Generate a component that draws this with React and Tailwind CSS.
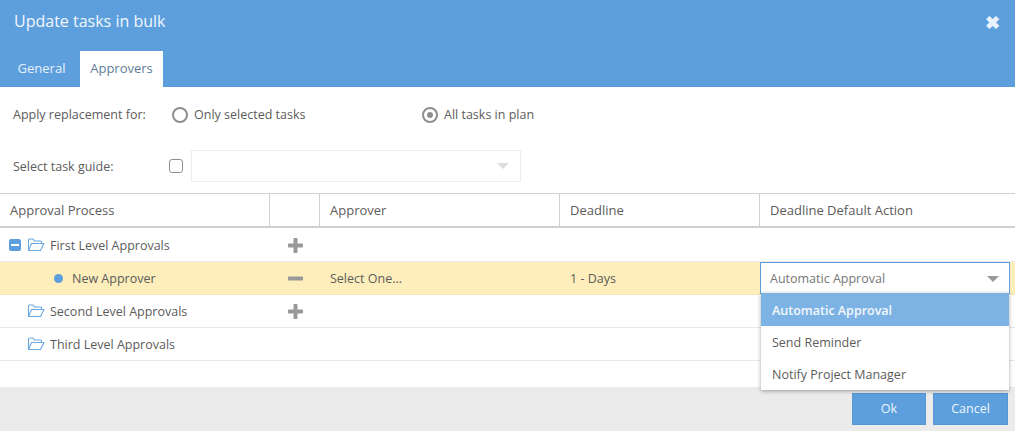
const rows = [
  { name: "First Level Approvals", folder: true, expander: true, add: true },
  { name: "New Approver", selected: true },
  { name: "Second Level Approvals", folder: true, add: true },
  { name: "Third Level Approvals", folder: true },
];

const options = ["Automatic Approval", "Send Reminder", "Notify Project Manager"];

function FolderOpen() {
  return (
    <svg width="18" height="14" viewBox="0 0 18 14" fill="none" stroke="#6aa8e2" strokeWidth="1.1" className="shrink-0">
      <path d="M1.5 12.5 V2 Q1.5 1 2.5 1 H6 L7.5 3 H13.5 Q14.5 3 14.5 4 V5.5" />
      <path d="M1.5 12.5 L4.5 5.5 H17 L13.5 12.5 Z" strokeLinejoin="round" />
    </svg>
  );
}

function PlusIcon() {
  return (
    <svg width="15" height="15" viewBox="0 0 15 15" fill="#999999">
      <rect x="0" y="5.5" width="15" height="4" rx="0.8" />
      <rect x="5.5" y="0" width="4" height="15" rx="0.8" />
    </svg>
  );
}

function MinusIcon() {
  return (
    <svg width="15" height="15" viewBox="0 0 15 15" fill="#999999">
      <rect x="0" y="5.5" width="15" height="4" rx="0.8" />
    </svg>
  );
}

function Caret({ color }) {
  return <span className={`w-0 h-0 border-x-[6px] border-x-transparent border-t-[6px] ${color}`} />;
}

function Radio({ checked }) {
  return (
    <span className="w-[16px] h-[16px] rounded-full border-[2px] border-[#8f8f8f] flex items-center justify-center bg-white">
      {checked && <span className="w-[6px] h-[6px] rounded-full bg-[#8f8f8f]" />}
    </span>
  );
}

function ApprovalRow({ row }) {
  return (
    <div className={`flex h-[33px] border-b ${row.selected ? "bg-[#fdeebb] border-[#f5e6b4]" : "border-[#e8e8e8]"}`}>
      <div className="w-[270px] flex items-center">
        {row.selected ? (
          <div className="flex items-center pl-[54px]">
            <span className="w-[9px] h-[9px] rounded-full bg-[#5d9fdd]" />
            <span className="ml-[9px] pt-[2px]">{row.name}</span>
          </div>
        ) : (
          <div className="flex items-center pl-[9px]">
            <span className="w-[12px] h-[12px] mr-[6px] rounded-[2px] flex items-center justify-center">
              {row.expander && (
                <span className="w-[12px] h-[12px] rounded-[2px] bg-[#5d9fdd] flex items-center justify-center">
                  <span className="w-[8px] h-[2px] bg-white" />
                </span>
              )}
            </span>
            <FolderOpen />
            <span className="ml-[5px] pt-[2px]">{row.name}</span>
          </div>
        )}
      </div>
      <div className="w-[50px] flex items-center justify-center">
        {row.add && <PlusIcon />}
        {row.selected && <MinusIcon />}
      </div>
      {row.selected && (
        <>
          <div className="w-[240px] pl-[10px] pt-[2px] flex items-center">Select One...</div>
          <div className="w-[200px] pl-[10px] pt-[2px] flex items-center">1 - Days</div>
          <div className="w-[250px] flex items-center justify-between pl-[9px] pr-[10px] pt-[2px] bg-white border border-[#5d9fdd] h-[32px] text-[#777777]">
            Automatic Approval
            <Caret color="border-t-[#999999]" />
          </div>
        </>
      )}
    </div>
  );
}

export default function App() {
  return (
    <div className="relative w-[1015px] h-[431px] overflow-hidden bg-white text-[12.5px] text-[#5c5c5c] font-['Open_Sans',sans-serif]">
      <header className="h-[87px] bg-[#5d9fdd] relative">
        <h1 className="pl-[14px] pt-[10px] text-[16px] leading-[22px] text-[#f1f6fc]">Update tasks in bulk</h1>
        <span className="absolute right-[15px] top-[12px] text-[#eaf3fb] text-[18px] leading-[20px] font-bold">✖</span>
        <div className="flex pl-[3px] mt-[19px] text-[13px]">
          <div className="w-[77px] h-[36px] flex items-center justify-center text-[#e6f0fa]">General</div>
          <div className="w-[83px] h-[36px] flex items-center justify-center bg-white text-[#5f7d99]">Approvers</div>
        </div>
      </header>

      <div className="h-[106px] px-[13px]">
        <div className="flex items-center h-[55px]">
          <span className="w-[159px] pt-[2px]">Apply replacement for:</span>
          <Radio />
          <span className="ml-[6px] w-[228px] pt-[2px]">Only selected tasks</span>
          <Radio checked />
          <span className="ml-[6px] pt-[2px]">All tasks in plan</span>
        </div>
        <div className="flex items-center h-[32px] mt-[8px]">
          <span className="w-[156px] pt-[2px]">Select task guide:</span>
          <span className="w-[14px] h-[14px] rounded-[3px] border-[1.5px] border-[#8f8f8f]" />
          <div className="ml-[8px] w-[330px] h-[32px] border border-[#eeeeee] flex items-center justify-end pr-[11px]">
            <Caret color="border-t-[#dddddd]" />
          </div>
        </div>
      </div>

      <div className="h-[35px] flex border-t border-[#d0d0d0] border-b-2 text-[13px]">
        <div className="w-[270px] pl-[10px] pt-px flex items-center border-r border-[#d0d0d0]">Approval Process</div>
        <div className="w-[50px] border-r border-[#d0d0d0]" />
        <div className="w-[240px] pl-[10px] pt-px flex items-center border-r border-[#d0d0d0]">Approver</div>
        <div className="w-[200px] pl-[10px] pt-px flex items-center border-r border-[#d0d0d0]">Deadline</div>
        <div className="pl-[10px] pt-px flex items-center">Deadline Default Action</div>
      </div>

      <div className="h-[159px] pt-px">
        {rows.map((row) => (
          <ApprovalRow key={row.name} row={row} />
        ))}
      </div>

      <footer className="h-[44px] bg-[#ebebeb] flex justify-end items-start gap-[7px] pt-[6px] pr-[7px]">
        <button className="w-[74px] h-[32px] bg-[#5d9fdd] border border-[#5596d3] text-[#eef5fc]">Ok</button>
        <button className="w-[75px] h-[32px] bg-[#5d9fdd] border border-[#5596d3] text-[#eef5fc]">Cancel</button>
      </footer>

      <ul className="absolute left-[761px] top-[293px] w-[248px] h-[97px] bg-white shadow-[0_1px_4px_rgba(0,0,0,0.35)]">
        {options.map((option, index) => (
          <li
            key={option}
            className={`pl-[11px] flex items-center ${index === 0 ? "h-[33px] pt-[3px] bg-[#7db3e4] text-[#f4f8fd] font-semibold" : "h-[32px] pt-[2px]"}`}
          >
            {option}
          </li>
        ))}
      </ul>
    </div>
  );
}
